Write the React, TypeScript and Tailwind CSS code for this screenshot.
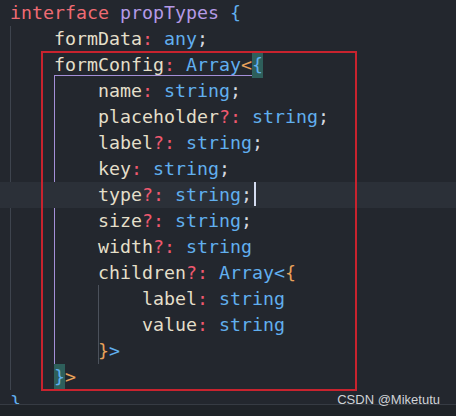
const kw = "text-[#ef6b73]";
const typeName = "text-[#b59ae6]";
const prop = "text-[#e4dfc9]";
const punct = "text-[#ef596f]";
const type = "text-[#61afef]";
const plain = "text-[#d7dae0]";
const orange = "text-[#e8a15a]";
const match = "bg-[#2e5f5b]";

type Tok = [string, string];

const Line = ({ toks, active }: { toks: Tok[]; active?: boolean }) => (
  <div className={`h-[26px] flex items-center pl-[10px] whitespace-pre ${active ? "bg-[#2b3038]" : ""}`}>
    {toks.map(([cls, t], i) => (
      <span key={i} className={cls}>
        {t}
      </span>
    ))}
  </div>
);

const field = (indent: string, name: string, optional: boolean, ty: string, semi: boolean): Tok[] => {
  const out: Tok[] = [[plain, indent], [prop, name]];
  if (optional) out.push([punct, "?"]);
  out.push([punct, ":"], [plain, " "], [type, ty]);
  if (semi) out.push([plain, ";"]);
  return out;
};

const I1 = "    ";
const I2 = "        ";
const I3 = "            ";

const App = () => {
  return (
    <div className="w-[456px] h-[416px] bg-[#23272e] relative overflow-hidden">
      {/* editor */}
      <div
        className="h-[404px] overflow-hidden relative text-[18.27px] leading-[26px]"
        style={{ fontFamily: "'DejaVu Sans Mono', 'Liberation Mono', monospace" }}
      >
        {/* indent guides */}
        <div className="absolute left-[10px] top-[26px] w-px h-[364px] bg-[#3e444e]" />
        <div className="absolute left-[54px] top-[75px] w-px h-[289px] bg-[#a48fd8]" />
        <div className="absolute left-[54px] top-[75px] w-[209px] h-px bg-[#a48fd8]" />
        <div className="absolute left-[98px] top-[285px] w-px h-[79px] bg-[#4b515b]" />

        <div className="relative">
          <Line toks={[[kw, "interface"], [plain, " "], [typeName, "propTypes"], [plain, " "], [type, "{"]]} />
          <Line toks={field(I1, "formData", false, "any", true)} />
          <Line
            toks={[
              [plain, I1],
              [prop, "formConfig"],
              [punct, ":"],
              [plain, " "],
              [type, "Array"],
              [orange, "<"],
              [`${type} ${match}`, "{"],
            ]}
          />
          <Line toks={field(I2, "name", false, "string", true)} />
          <Line toks={field(I2, "placeholder", true, "string", true)} />
          <Line toks={field(I2, "label", true, "string", true)} />
          <Line toks={field(I2, "key", false, "string", true)} />
          <Line toks={[...field(I2, "type", true, "string", true)]} active />
          <Line toks={field(I2, "size", true, "string", true)} />
          <Line toks={field(I2, "width", true, "string", false)} />
          <Line
            toks={[
              [plain, I2],
              [prop, "children"],
              [punct, "?"],
              [punct, ":"],
              [plain, " "],
              [type, "Array"],
              [type, "<"],
              [orange, "{"],
            ]}
          />
          <Line toks={field(I3, "label", false, "string", false)} />
          <Line toks={field(I3, "value", false, "string", false)} />
          <Line toks={[[plain, I2], [orange, "}"], [type, ">"]]} />
          <Line toks={[[plain, I1], [`${type} ${match}`, "}"], [orange, ">"]]} />
          <Line toks={[[type, "}"]]} />
        </div>

        {/* cursor */}
        <div className="absolute left-[254px] top-[182px] w-[2px] h-[24px] bg-[#d4dcf0]" />

        {/* annotation box */}
        <div className="absolute left-[41px] top-[51px] w-[316px] h-[340px] border-2 border-[#c8232e]" />
      </div>

      {/* bottom panel */}
      <div className="h-[12px] bg-[#1f2328] border-t border-[#363b43]" />

      {/* watermark */}
      <div
        className="absolute right-[16px] top-[392px] text-[13px] leading-[16px] text-[#cfd2d6]"
        style={{ fontFamily: "'Liberation Sans', Arial, sans-serif" }}
      >
        CSDN @Miketutu
      </div>
    </div>
  );
};

export default App;
